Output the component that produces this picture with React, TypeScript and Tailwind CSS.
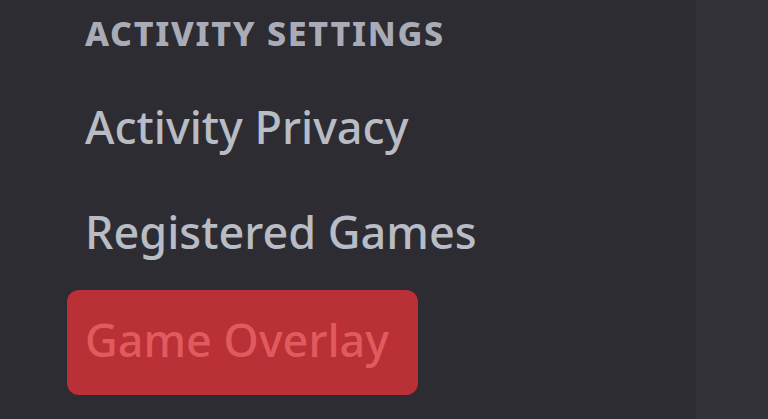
export default function App() {
  const font = { fontFamily: '"Noto Sans", "Open Sans", sans-serif' };
  return (
    <div className="flex h-[419px] w-[768px] overflow-hidden" style={font}>
      <div className="flex h-full w-[696px] flex-col bg-[#2d2c32] pl-[67px] pt-[11px]">
        <div className="whitespace-nowrap px-[18px] text-[34px] font-extrabold uppercase leading-[44px] tracking-[0.05em] text-[#a9acb6]">
          Activity Settings
        </div>
        <div className="mt-[25px] flex flex-col">
          <div className="flex h-[105px] items-center whitespace-nowrap px-[18px] pb-[12px] text-[45px] font-medium text-[#b8bcc5]">
            Activity Privacy
          </div>
          <div className="flex h-[105px] items-center whitespace-nowrap px-[18px] pb-[12px] text-[45px] font-medium text-[#b8bcc5]">
            Registered Games
          </div>
          <div className="flex h-[105px] w-[351px] items-center whitespace-nowrap rounded-[12px] bg-[#b93036] px-[18px] pb-[6px] text-[45px] font-medium text-[#e05a5e]">
            Game Overlay
          </div>
        </div>
      </div>
      <div className="h-full flex-1 bg-[#333238]" />
    </div>
  );
}
